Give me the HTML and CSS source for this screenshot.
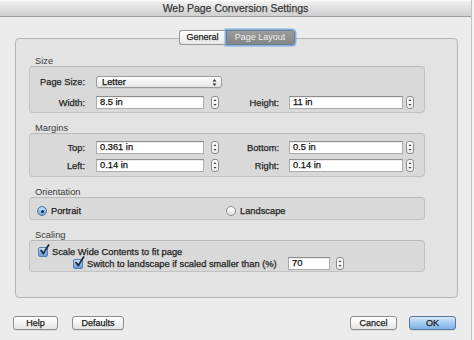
FILE: index.html
```html
<!DOCTYPE html>
<html>
<head>
<meta charset="utf-8">
<title>Web Page Conversion Settings</title>
<link rel="stylesheet" href="styles.css">
</head>
<body>
<div class="window">
  <div class="titlebar">Web Page Conversion Settings</div>
  <div class="tabbox">
    <div class="tabs">
      <span class="tab general">General</span>
      <span class="tab sel">Page Layout</span>
    </div>

    <section class="sec first">
      <div class="seclabel">Size</div>
      <div class="group g-size">
        <div class="row r12">
          <span class="lbl">Page Size:</span>
          <span class="popup">Letter
            <svg class="pop-arrows" width="5" height="9" viewBox="0 0 5 9"><path d="M0.5 3.5 L2.5 1 L4.5 3.5Z M0.5 5.5 L2.5 8 L4.5 5.5Z" fill="#333"/></svg>
          </span>
        </div>
        <div class="row gap8">
          <span class="lbl">Width:</span>
          <span class="field">8.5 in</span>
          <span class="step"><svg width="6" height="11" viewBox="0 0 6 11"><path d="M1.5 4 L3 2.2 L4.5 4Z M1.5 7 L3 8.8 L4.5 7Z" fill="#3a3a3a"/></svg></span>
          <span class="lbl2">Height:</span>
          <span class="field2">11 in</span>
          <span class="step step2"><svg width="6" height="11" viewBox="0 0 6 11"><path d="M1.5 4 L3 2.2 L4.5 4Z M1.5 7 L3 8.8 L4.5 7Z" fill="#3a3a3a"/></svg></span>
        </div>
      </div>
    </section>

    <section class="sec">
      <div class="seclabel">Margins</div>
      <div class="group g-margins">
        <div class="row">
          <span class="lbl">Top:</span>
          <span class="field">0.361 in</span>
          <span class="step"><svg width="6" height="11" viewBox="0 0 6 11"><path d="M1.5 4 L3 2.2 L4.5 4Z M1.5 7 L3 8.8 L4.5 7Z" fill="#3a3a3a"/></svg></span>
          <span class="lbl2">Bottom:</span>
          <span class="field2">0.5 in</span>
          <span class="step step2"><svg width="6" height="11" viewBox="0 0 6 11"><path d="M1.5 4 L3 2.2 L4.5 4Z M1.5 7 L3 8.8 L4.5 7Z" fill="#3a3a3a"/></svg></span>
        </div>
        <div class="row gap5">
          <span class="lbl">Left:</span>
          <span class="field">0.14 in</span>
          <span class="step"><svg width="6" height="11" viewBox="0 0 6 11"><path d="M1.5 4 L3 2.2 L4.5 4Z M1.5 7 L3 8.8 L4.5 7Z" fill="#3a3a3a"/></svg></span>
          <span class="lbl2">Right:</span>
          <span class="field2">0.14 in</span>
          <span class="step step2"><svg width="6" height="11" viewBox="0 0 6 11"><path d="M1.5 4 L3 2.2 L4.5 4Z M1.5 7 L3 8.8 L4.5 7Z" fill="#3a3a3a"/></svg></span>
        </div>
      </div>
    </section>

    <section class="sec">
      <div class="seclabel">Orientation</div>
      <div class="group g-orient">
        <div class="row r10">
          <span class="opt portrait"><span class="radio on"></span>Portrait</span>
          <span class="opt"><span class="radio"></span>Landscape</span>
        </div>
      </div>
    </section>

    <section class="sec">
      <div class="seclabel">Scaling</div>
      <div class="group g-scale">
        <div class="row r10">
          <span class="check"><svg width="11" height="12" viewBox="0 0 11 12"><path d="M2 6.5 L4.3 9.6 L9.6 1" fill="none" stroke="#1c2a3b" stroke-width="1.7" stroke-linecap="round" stroke-linejoin="round"/></svg></span>
          <span class="ctext">Scale Wide Contents to fit page</span>
        </div>
        <div class="row r13 sub">
          <span class="check"><svg width="11" height="12" viewBox="0 0 11 12"><path d="M2 6.5 L4.3 9.6 L9.6 1" fill="none" stroke="#1c2a3b" stroke-width="1.7" stroke-linecap="round" stroke-linejoin="round"/></svg></span>
          <span class="ctext ctext2">Switch to landscape if scaled smaller than (%)</span>
          <span class="field pct">70</span>
          <span class="step step3"><svg width="6" height="11" viewBox="0 0 6 11"><path d="M1.5 4 L3 2.2 L4.5 4Z M1.5 7 L3 8.8 L4.5 7Z" fill="#3a3a3a"/></svg></span>
        </div>
      </div>
    </section>
  </div>

  <div class="buttons">
    <span class="btn help">Help</span>
    <span class="btn defaults">Defaults</span>
    <span class="spacer"></span>
    <span class="btn cancel">Cancel</span>
    <span class="btn ok">OK</span>
  </div>
</div>
</body>
</html>
```
FILE: styles.css
```css
* { box-sizing: border-box; }
html, body { margin: 0; padding: 0; }
body {
  width: 474px;
  height: 340px;
  overflow: hidden;
  background: #f4f4f4;
  font-family: "Liberation Sans", Arial, sans-serif;
  font-size: 9.3px;
  color: #222;
  -webkit-text-stroke: 0.25px currentColor;
}
.window {
  width: 472px;
  height: 340px;
  background: #ececec;
  border-right: 1px solid #c2c2c2;
  display: flex;
  flex-direction: column;
}
.titlebar {
  flex: none;
  height: 17px;
  background: linear-gradient(#f3f3f3, #e6e6e6 30%, #cfcfcf);
  border-top: 1px solid #fafafa;
  border-bottom: 1px solid #9c9c9c;
  text-align: center;
  font-size: 10.5px;
  line-height: 15px;
  color: #3a3a3a;
}
.tabbox {
  flex: none;
  margin: 21px 0 0 15px;
  width: 443px;
  height: 260px;
  border: 1px solid #b6b6b6;
  border-radius: 4px;
  background: #e3e3e3;
  padding: 0 32px 0 13px;
}
.tabs {
  display: flex;
  justify-content: center;
  margin: -9px -32px 0 -13px;
  height: 15px;
}
.tab {
  height: 15px;
  font-size: 9px;
  line-height: 13px;
  text-align: center;
  border: 1px solid #989898;
}
.tab.general {
  width: 47px;
  border-radius: 3px 0 0 3px;
  border-right: none;
  background: linear-gradient(#ffffff, #f4f4f4 50%, #e8e8e8);
  color: #222;
}
.tab.sel {
  width: 69px;
  border-radius: 0 3px 3px 0;
  background: linear-gradient(#9c9c9c, #868686);
  border-color: #6f7f93;
  color: #eeeeee;
  -webkit-text-stroke: 0;
  box-shadow: 0 0 0 1.5px rgba(110, 165, 225, 0.85);
}
.sec { margin-top: 10px; }
.sec.first { margin-top: 11px; }
.seclabel {
  height: 10px;
  line-height: 10px;
  padding-left: 6px;
  color: #3a3a3a;
  -webkit-text-stroke: 0;
}
.group {
  border: 1px solid #c2c2c2;
  border-top-color: #b9b9b9;
  border-radius: 4px;
  background: #d9d9d9;
}
.g-size { padding: 9px 0 3px; }
.g-margins { padding: 7px 0 4px; }
.g-orient { padding: 8px 7px 3px; }
.g-scale { padding: 6px 0 1px 8px; }

.row {
  display: flex;
  align-items: center;
  height: 13px;
}
.row.r12 { height: 12px; }
.row.r10 { height: 10px; }
.row.gap8 { margin-top: 8px; }
.row.gap5 { margin-top: 5px; }

.lbl {
  flex: none;
  width: 55px;
  text-align: right;
  color: #262626;
}
.lbl2 {
  flex: none;
  width: 60px;
  text-align: right;
  color: #262626;
}
.field, .field2 {
  flex: none;
  height: 13px;
  line-height: 11px;
  padding-left: 3px;
  background: #fff;
  border: 1px solid #acacac;
  border-top-color: #8c8c8c;
  box-shadow: inset 0 1px 0 #ececec;
  color: #111;
}
.field { margin-left: 11px; width: 108px; }
.field2 { margin-left: 10px; width: 114px; }

.popup {
  flex: none;
  position: relative;
  margin-left: 11px;
  width: 126px;
  height: 12px;
  line-height: 10px;
  padding-left: 5px;
  border: 1px solid #9a9a9a;
  border-radius: 3px;
  background: linear-gradient(#ffffff, #f3f3f3 50%, #e6e6e6);
  box-shadow: 0 1px 0 rgba(0, 0, 0, 0.06);
  color: #111;
}
.pop-arrows {
  position: absolute;
  right: 4px;
  top: 1px;
}

.step {
  flex: none;
  display: flex;
  align-items: center;
  justify-content: center;
  margin-left: 7px;
  width: 8px;
  height: 13px;
  border: 1px solid #8e8e8e;
  border-radius: 3px;
  background: linear-gradient(#ffffff, #ececec);
}
.step.step2 { margin-left: 3px; }
.step.step3 { margin-left: 6px; }

.opt {
  display: flex;
  align-items: center;
  color: #222;
}
.opt.portrait { width: 189px; }
.radio {
  flex: none;
  width: 10px;
  height: 10px;
  margin-right: 4px;
  border-radius: 50%;
  border: 1px solid #8d8d8d;
  background: linear-gradient(#ffffff, #e2e2e2);
  display: flex;
  align-items: center;
  justify-content: center;
}
.radio.on {
  border-color: #5278a6;
  background: radial-gradient(circle at 50% 30%, #d4e8fb, #80b4e8 60%, #5b93d3);
}
.radio.on::after {
  content: "";
  width: 3px;
  height: 3px;
  border-radius: 50%;
  background: #162433;
}

.check {
  flex: none;
  position: relative;
  width: 10px;
  height: 10px;
  border: 1px solid #5a7ea8;
  border-radius: 2px;
  background: linear-gradient(#cfe4f9, #86b7e8 55%, #6aa0db);
}
.check svg {
  position: absolute;
  left: 0;
  top: -4px;
}
.ctext { margin-left: 4px; white-space: nowrap; color: #222; }
.row.sub { margin-top: 0; padding-left: 35px; }
.ctext2 { flex: none; width: 188px; }
.field.pct { margin-left: 13px; width: 42px; }

.buttons {
  flex: none;
  display: flex;
  margin-top: 18px;
  height: 14px;
  padding: 0 15px 0 13px;
}
.spacer { flex: 1; }
.btn {
  flex: none;
  height: 14px;
  line-height: 12px;
  font-size: 9px;
  text-align: center;
  color: #1a1a1a;
  border: 1px solid #8d8d8d;
  border-radius: 3px;
  background: linear-gradient(#ffffff, #f4f4f4 50%, #e4e4e4);
  box-shadow: 0 1px 0 rgba(0, 0, 0, 0.08);
}
.btn.help { width: 45px; }
.btn.defaults { width: 52px; margin-left: 14px; }
.btn.cancel { width: 47px; }
.btn.ok {
  width: 47px;
  margin-left: 12px;
  border-color: #56789f;
  background: linear-gradient(#d6e9fb, #a3cbf1 50%, #7cb0e6);
}
```
